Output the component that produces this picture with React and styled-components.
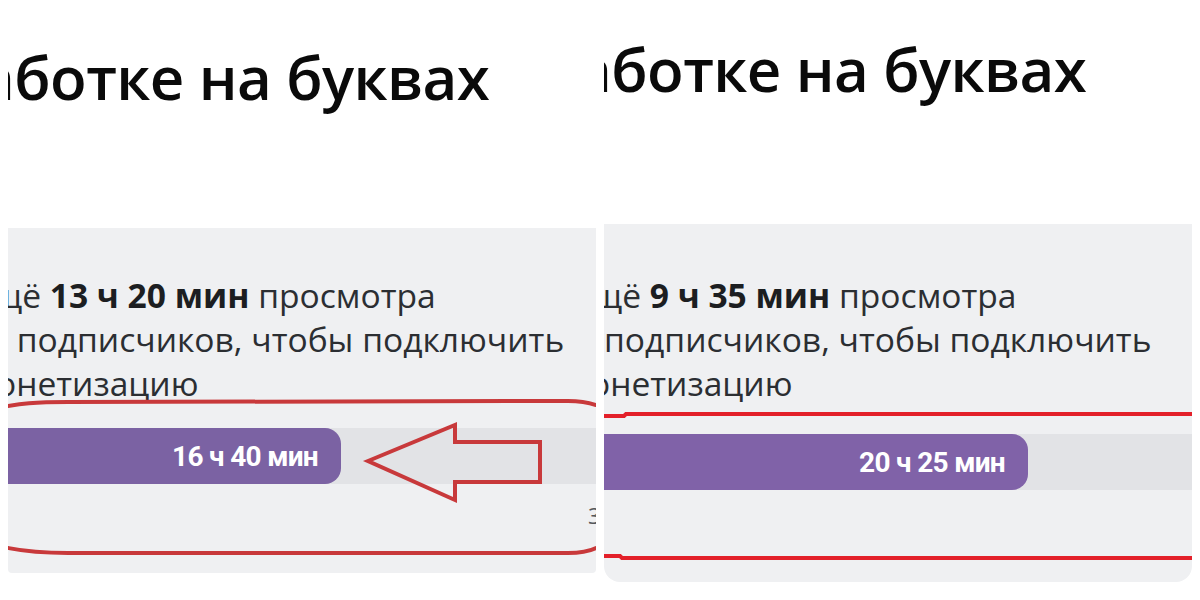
import React from 'react';
import styled, { createGlobalStyle } from 'styled-components';

const Global = createGlobalStyle`
  html, body {
    margin: 0;
    padding: 0;
    background: #ffffff;
  }
  body {
    font-family: "Open Sans", "Noto Sans", "DejaVu Sans", sans-serif;
  }
`

const Page = styled.div`
  display: flex;
  gap: 8px;
  width: 1200px;
  height: 600px;
  padding: 0 8px;
  box-sizing: border-box;
  overflow: hidden;
`
const Panel = styled.div`
  display: flex;
  flex-direction: column;
  width: 588px;
  overflow: hidden;
`
const Title = styled.div`
  height: ${p => p.$h}px;
  padding-top: ${p => p.$top}px;
  box-sizing: border-box;
  margin-left: ${p => -p.$shift}px;
  font-size: 60px;
  font-weight: 600;
  line-height: 80px;
  color: #0a0a0a;
  white-space: nowrap;
  letter-spacing: -0.6px;
`
const Card = styled.div`
  position: relative;
  height: ${p => p.$h}px;
  background: #eff0f2;
  border-radius: ${p => p.$round ? '0 0 16px 16px' : '0 0 4px 4px'};
  padding-top: ${p => p.$top}px;
  box-sizing: border-box;
  overflow: hidden;
`
const Line = styled.div`
  margin-left: ${p => -p.$shift}px;
  font-size: 33.6px;
  line-height: 44px;
  color: #2b2e32;
  white-space: nowrap;
  b {
    font-weight: 700;
    color: #1c1e21;
  }
`
const Track = styled.div`
  display: flex;
  height: 56px;
  margin-top: ${p => p.$gap}px;
  background: #e2e3e6;
`
const Fill = styled.div`
  display: flex;
  align-items: center;
  justify-content: flex-end;
  height: 100%;
  padding-right: 23px;
  box-sizing: border-box;
  background: ${p => p.$color};
  border-radius: 0 16px 16px 0;
  color: #ffffff;
  font-family: Roboto, "Open Sans", sans-serif;
  font-weight: 700;
  font-size: 28px;
  letter-spacing: -0.7px;
`
const Scale = styled.div`
  padding-left: ${p => p.$left}px;
  margin-top: 16px;
  font-size: 22px;
  color: #55585c;
  white-space: nowrap;
`
const Marks = styled.svg`
  position: absolute;
  left: 0;
  top: 0;
  width: 100%;
  height: 100%;
  pointer-events: none;
`

const LeftMarks = () => (
  <Marks viewBox="0 0 588 345" fill="none">
    <path
      d="M0 178 C12 176 24 174 60 174 L560 173 C575 173 582 175 588 177"
      stroke="#c8393b" strokeWidth="4" strokeLinecap="round"
    />
    <path
      d="M0 320 C10 322 24 325 60 325 L560 325 C575 325 582 323 588 320"
      stroke="#c8393b" strokeWidth="4" strokeLinecap="round"
    />
    <polygon
      points="360,233 447,197 447,214 532,214 532,254 447,254 447,272"
      stroke="#c8393b" strokeWidth="4" strokeLinejoin="miter"
    />
  </Marks>
)

const RightMarks = () => (
  <Marks viewBox="0 0 588 358" fill="none">
    <path d="M0 192 L20 192 L22 190 L588 190" stroke="#e3202a" strokeWidth="4" />
    <path d="M0 332 L16 332 L18 334 L588 334" stroke="#e3202a" strokeWidth="4" />
  </Marks>
)

export default function App() {
  return (
    <>
      <Global />
      <Page>
        <Panel>
          <Title $h={228} $top={37} $shift={28}>аботке на буквах</Title>
          <Card $h={345} $top={45}>
            <Line $shift={16}>щё <b>13 ч 20 мин</b> просмотра</Line>
            <Line $shift={0}>&nbsp;подписчиков, чтобы подключить</Line>
            <Line $shift={12}>онетизацию</Line>
            <Track $gap={23}>
              <Fill $color="#7b62a3" style={{ width: 333 }}>16 ч 40 мин</Fill>
            </Track>
            <Scale $left={580}>30 ч</Scale>
            <LeftMarks />
          </Card>
        </Panel>
        <Panel>
          <Title $h={224} $top={29} $shift={27}>аботке на буквах</Title>
          <Card $h={358} $top={49} $round>
            <Line $shift={12}>щё <b>9 ч 35 мин</b> просмотра</Line>
            <Line $shift={0}>подписчиков, чтобы подключить</Line>
            <Line $shift={14}>онетизацию</Line>
            <Track $gap={29}>
              <Fill $color="#8062a8" style={{ width: 424 }}>20 ч 25 мин</Fill>
            </Track>
            <RightMarks />
          </Card>
        </Panel>
      </Page>
    </>
  );
}
